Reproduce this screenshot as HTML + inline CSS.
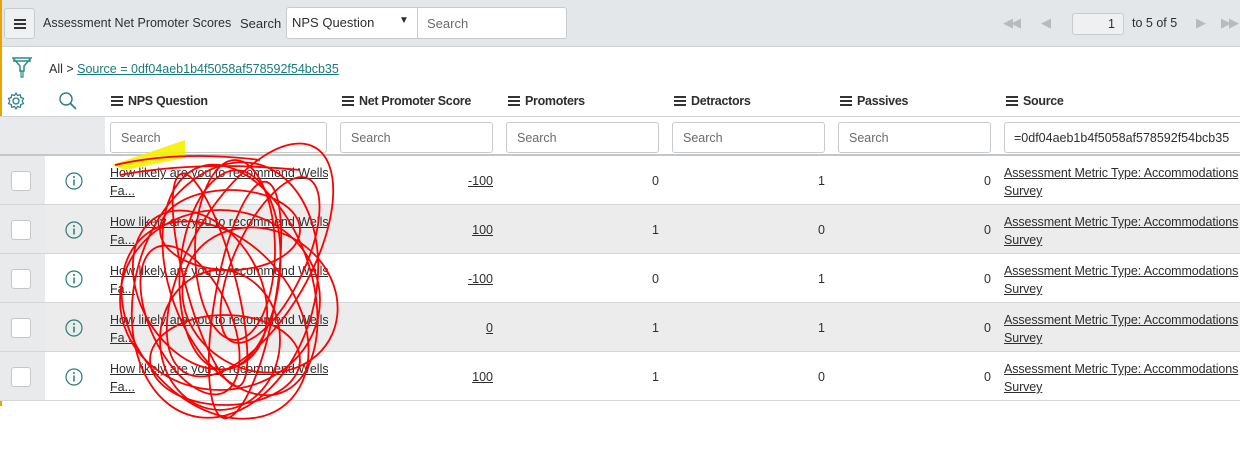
<!DOCTYPE html>
<html><head><style>
*{box-sizing:border-box;margin:0;padding:0}
body{width:1240px;height:452px;overflow:hidden;background:#fff;font-family:"Liberation Sans Narrow","Liberation Sans",sans-serif;font-size:12.5px;color:#2e2e2e;position:relative;white-space:nowrap}
.t{letter-spacing:0}
.top{position:absolute;left:0;top:0;width:1240px;height:47px;background:#e4e7ea;border-bottom:1px solid #cfd3d6}
.edge{position:absolute;left:0;top:0;width:2px;height:406px;background:#e8a400}
.abs{position:absolute}
.btn{left:4px;top:8px;width:31px;height:31px;border:1px solid #c8cbce;border-radius:3px;background:#eef0f2}
.inp{background:#fff;border:1px solid #c8cbce;border-radius:3px}
.ph{color:#6b6b6b}
a{color:#2e2e2e;text-decoration:underline}
.hdr{font-weight:bold;color:#2e2e2e;font-size:12.5px;letter-spacing:-0.3px}
.ham{display:inline-block;width:12px;height:10px;border-top:2px solid #333;border-bottom:2px solid #333;position:relative;vertical-align:-1px;margin-right:5px}
.ham:after{content:"";position:absolute;left:0;right:0;top:2px;border-top:2px solid #333}
.row{position:absolute;left:0;width:1240px;height:49px;border-bottom:1px solid #d4d6d8;letter-spacing:0}
.cb{position:absolute;left:11px;top:15px;width:20px;height:20px;background:#fff;border:1px solid #c4c6c8;border-radius:3px}
.num{position:absolute;top:18px;text-align:right}
</style></head><body>
<div class="top"></div>
<div class="abs btn"><span class="ham" style="position:absolute;left:9px;top:10px"></span></div>
<div class="abs t" style="left:43px;top:16px;font-size:12.5px">Assessment Net Promoter Scores</div>
<div class="abs t" style="left:240px;top:16px;font-size:13px">Search</div>
<div class="abs inp" style="left:286px;top:7px;width:281px;height:32px"></div>
<div class="abs" style="left:417px;top:8px;width:1px;height:30px;background:#c8cbce"></div>
<div class="abs t" style="left:292px;top:15px;font-size:13px">NPS Question</div>
<div class="abs" style="left:399px;top:15px;font-size:10px">▼</div>
<div class="abs ph t" style="left:427px;top:16px;font-size:13px">Search</div>
<div class="abs" style="left:1003px;top:15px;color:#b7bbbe;font-size:13px;letter-spacing:-2px">◀◀</div>
<div class="abs" style="left:1041px;top:15px;color:#b7bbbe;font-size:13px">◀</div>
<div class="abs inp" style="left:1072px;top:13px;width:52px;height:22px;background:#eef0f2"><span style="position:absolute;right:8px;top:3px">1</span></div>
<div class="abs t" style="left:1132px;top:16px">to 5 of 5</div>
<div class="abs" style="left:1196px;top:15px;color:#b7bbbe;font-size:13px">▶</div>
<div class="abs" style="left:1221px;top:15px;color:#b7bbbe;font-size:13px;letter-spacing:-2px">▶▶</div>
<div class="edge"></div>
<svg class="abs" style="left:12px;top:56px" width="20" height="22" viewBox="0 0 20 22"><path d="M1 2H19L12 10V15H8V10Z M1 5H19" fill="none" stroke="#2a8c8c" stroke-width="1.5"/><path d="M9 15V21H11V15" fill="none" stroke="#2a8c8c" stroke-width="1.2"/></svg>
<div class="abs t" style="left:49px;top:62px">All &gt; <a href="#" style="color:#1a7a7a">Source = 0df04aeb1b4f5058af578592f54bcb35</a></div>
<div class="abs" style="left:0;top:116px;width:105px;height:40px;background:#e8eaec"></div>
<div class="abs" style="left:0;top:116px;width:1240px;height:40px;border-top:1px solid #d0d2d4;border-bottom:2px solid #c4c6c8"></div>
<svg class="abs" style="left:6px;top:91px" width="20" height="20" viewBox="0 0 20 20"><circle cx="10" cy="10" r="3" fill="none" stroke="#2a7a8a" stroke-width="1.3"/><path d="M10 2l1.5 2.5 2.8-.8.5 2.8 2.7 1-1.3 2.5 1.3 2.5-2.7 1-.5 2.8-2.8-.8L10 18l-1.5-2.5-2.8.8-.5-2.8-2.7-1L3.8 10 2.5 7.5l2.7-1 .5-2.8 2.8.8z" fill="none" stroke="#2a7a8a" stroke-width="1.2"/></svg>
<svg class="abs" style="left:58px;top:91px" width="20" height="20" viewBox="0 0 20 20"><circle cx="8" cy="8" r="6" fill="none" stroke="#2a7a8a" stroke-width="1.4"/><path d="M12.5 12.5L18 18" stroke="#2a7a8a" stroke-width="1.6"/></svg>
<div class="abs hdr" style="left:111px;top:94px"><span class="ham"></span>NPS Question</div>
<div class="abs hdr" style="left:342px;top:94px"><span class="ham"></span>Net Promoter Score</div>
<div class="abs hdr" style="left:508px;top:94px"><span class="ham"></span>Promoters</div>
<div class="abs hdr" style="left:674px;top:94px"><span class="ham"></span>Detractors</div>
<div class="abs hdr" style="left:840px;top:94px"><span class="ham"></span>Passives</div>
<div class="abs hdr" style="left:1006px;top:94px"><span class="ham"></span>Source</div>
<div class="abs inp t" style="left:110px;top:122px;width:217px;height:31px"><span class="ph" style="position:absolute;left:10px;top:8px">Search</span></div>
<div class="abs inp t" style="left:340px;top:122px;width:153px;height:31px"><span class="ph" style="position:absolute;left:10px;top:8px">Search</span></div>
<div class="abs inp t" style="left:506px;top:122px;width:153px;height:31px"><span class="ph" style="position:absolute;left:10px;top:8px">Search</span></div>
<div class="abs inp t" style="left:672px;top:122px;width:153px;height:31px"><span class="ph" style="position:absolute;left:10px;top:8px">Search</span></div>
<div class="abs inp t" style="left:838px;top:122px;width:153px;height:31px"><span class="ph" style="position:absolute;left:10px;top:8px">Search</span></div>
<div class="abs inp t" style="left:1004px;top:122px;width:240px;height:31px"><span style="position:absolute;left:9px;top:8px">=0df04aeb1b4f5058af578592f54bcb35</span></div>
<div id="rows"></div>
<script>
var d=[["-100","0","1","0"],["100","1","0","0"],["-100","0","1","0"],["0","1","1","0"],["100","1","0","0"]];
var h="";
d.forEach(function(r,i){var t=156+i*49,bg=i%2?"#ececec":"#fff";
h+='<div class="row" style="top:'+t+'px;background:'+bg+'">'+
'<div style="position:absolute;left:0;top:0;width:45px;height:48px;background:#e8eaec"></div><div class="cb"></div>'+
'<svg style="position:absolute;left:65px;top:16px" width="18" height="18" viewBox="0 0 18 18"><circle cx="9" cy="9" r="8" fill="none" stroke="#2a7a7a" stroke-width="1.2"/><path d="M9 7.5v6" stroke="#2a7a7a" stroke-width="1.5"/><circle cx="9" cy="5" r="1" fill="#2a7a7a"/></svg>'+
'<div style="position:absolute;left:110px;top:8px;line-height:18px;width:218px;overflow:hidden"><a href="#">How likely are you to recommend Wells</a><br><a href="#">Fa...</a></div>'+
'<div class="num" style="left:440px;width:53px"><a href="#">'+r[0]+'</a></div>'+
'<div class="num" style="left:600px;width:59px">'+r[1]+'</div>'+
'<div class="num" style="left:766px;width:59px">'+r[2]+'</div>'+
'<div class="num" style="left:932px;width:59px">'+r[3]+'</div>'+
'<div style="position:absolute;left:1004px;top:8px;line-height:18px;letter-spacing:-0.1px"><a href="#">Assessment Metric Type: Accommodations</a><br><a href="#">Survey</a></div></div>';});
document.getElementById("rows").innerHTML=h;
</script>
<svg class="abs" style="left:0;top:0" width="1240" height="452">
<path d="M112 165L185 140L185 158L125 170Z" fill="#f5f000" opacity="0.9"/>
<g fill="none" stroke="#f00" stroke-width="1.8">
<ellipse cx="225" cy="290" rx="90" ry="130" transform="rotate(15 225 290)"/>
<ellipse cx="240" cy="280" rx="70" ry="120" transform="rotate(-20 240 280)"/>
<ellipse cx="220" cy="300" rx="100" ry="90"/>
<ellipse cx="250" cy="260" rx="60" ry="130" transform="rotate(30 250 260)"/>
<ellipse cx="215" cy="320" rx="80" ry="110" transform="rotate(-40 215 320)"/>
<ellipse cx="230" cy="270" rx="50" ry="100" transform="rotate(5 230 270)"/>
<ellipse cx="200" cy="290" rx="85" ry="60" transform="rotate(60 200 290)"/>
<ellipse cx="260" cy="300" rx="70" ry="80" transform="rotate(-60 260 300)"/>
<ellipse cx="235" cy="250" rx="40" ry="90"/>
<ellipse cx="220" cy="340" rx="60" ry="70"/>
<ellipse cx="245" cy="300" rx="30" ry="120" transform="rotate(10 245 300)"/>
<ellipse cx="210" cy="280" rx="25" ry="110" transform="rotate(-15 210 280)"/>
<ellipse cx="270" cy="260" rx="35" ry="90" transform="rotate(25 270 260)"/>
<ellipse cx="190" cy="320" rx="40" ry="80" transform="rotate(-25 190 320)"/>
<ellipse cx="230" cy="230" rx="70" ry="40"/>
<ellipse cx="225" cy="360" rx="75" ry="45"/>
<path d="M115 165Q180 150 260 160M120 175Q200 160 300 170"/>
</g></svg>
</body></html>
